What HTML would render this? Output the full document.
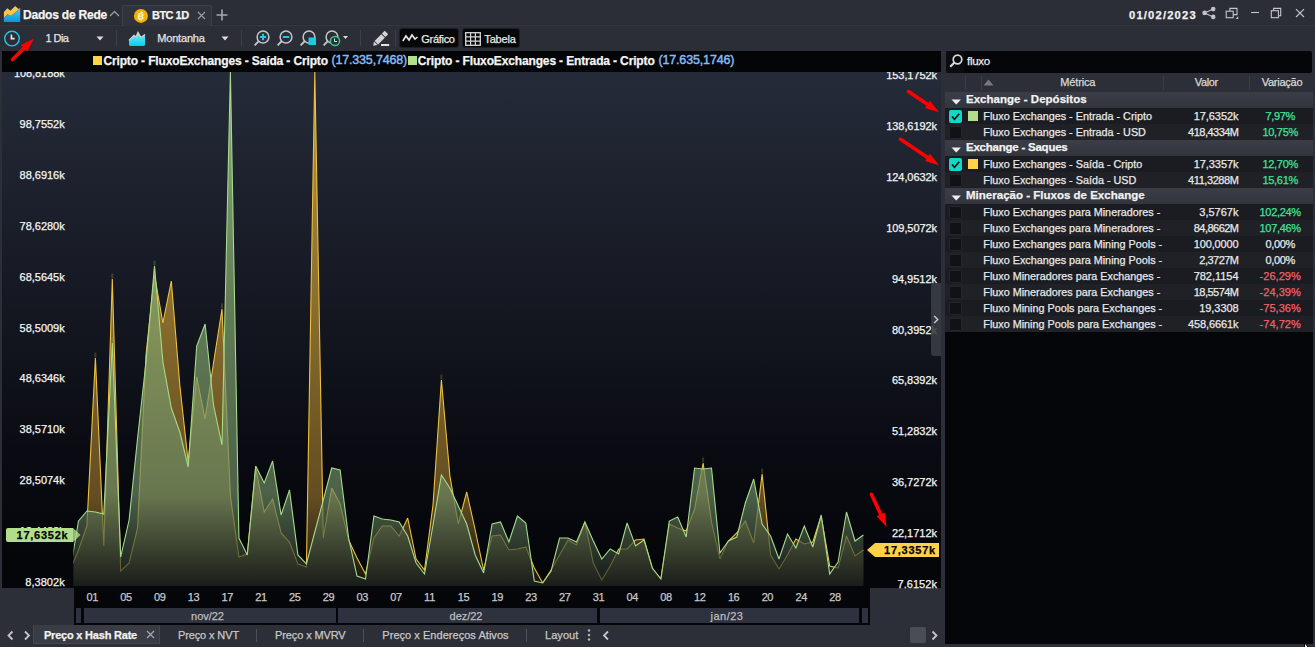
<!DOCTYPE html>
<html><head><meta charset="utf-8">
<style>
html,body{margin:0;padding:0}
body{width:1315px;height:647px;overflow:hidden;position:relative;background:#2c2f37;font-family:"Liberation Sans",sans-serif}
.a{position:absolute;box-sizing:border-box}
.t{position:absolute;white-space:nowrap;line-height:1;-webkit-text-stroke:0.25px currentColor}
</style></head><body>
<div class="a" style="left:0px;top:0px;width:1315px;height:25px;background:#2b2e36;"></div>
<div class="a" style="left:0px;top:24px;width:1315px;height:1px;background:#282b31;"></div>
<div class="a" style="left:0px;top:25px;width:1315px;height:1px;background:#35383d;"></div>
<div class="a" style="left:0px;top:26px;width:1315px;height:25px;background:#2b2e36;"></div>
<svg class="a" style="left:3px;top:5px" width="18" height="18" viewBox="0 0 18 18">
<defs><linearGradient id="lgb" x1="0" y1="0" x2="0" y2="1"><stop offset="0" stop-color="#4cc8f8"/><stop offset="1" stop-color="#0896d8"/></linearGradient></defs>
<polygon points="0.9,7 4.4,3.3 7.4,5.7 12.2,1.1 15.5,4 17.2,3.1 17.2,3.4 8,10.9 4.4,9.2 0.9,13" fill="#fcc64a"/>
<polygon points="0.9,13 4.4,9.2 8,10.9 17.2,3.4 17.2,17 0.9,17" fill="url(#lgb)"/></svg>
<svg class="a" style="left:109px;top:10px" width="11" height="7"><polyline points="1,6 5.5,1.5 10,6" fill="none" stroke="#9a9ca2" stroke-width="1.3"/></svg>
<div class="a" style="left:122px;top:5px;width:90px;height:21px;background:#30333b;border:1px solid #3e4149;border-bottom:none;border-radius:2px 2px 0 0"></div>
<svg class="a" style="left:133px;top:8px" width="16" height="16" viewBox="0 0 16 16"><circle cx="7.9" cy="7.9" r="7" fill="#f1b300"/>
<text x="8" y="11.4" font-family="Liberation Sans" font-weight="bold" font-size="9" fill="#fff6dc" text-anchor="middle" transform="rotate(8 8 8)">B</text><path d="M7.6,3.6 V5 M9,3.8 V5 M7.2,11 V12.4 M8.6,11.2 V12.5" stroke="#fff6dc" stroke-width="0.9" transform="rotate(8 8 8)"/></svg>
<svg class="a" style="left:197px;top:11px" width="9" height="9"><path d="M1,1 L8,8 M8,1 L1,8" stroke="#9a9ca2" stroke-width="1.2"/></svg>
<svg class="a" style="left:216px;top:9px" width="12" height="12"><path d="M6,0.5 V11.5 M0.5,6 H11.5" stroke="#a6a8ad" stroke-width="1.6"/></svg>
<svg class="a" style="left:1190px;top:0" width="125" height="25" viewBox="1190 0 125 25">
<g fill="#c0c2c6"><circle cx="1213.2" cy="9.1" r="2.3"/><circle cx="1204.6" cy="12.9" r="2.3"/><circle cx="1213.2" cy="16.9" r="2.3"/></g>
<path d="M1213.2,9.1 L1204.6,12.9 L1213.2,16.9" stroke="#c0c2c6" stroke-width="1.1" fill="none"/>
<path d="M1229.9,11 V8.4 H1237 V14.6 H1233.3" stroke="#c4c6ca" stroke-width="1.1" fill="none"/>
<rect x="1226.2" y="11.2" width="7" height="6.5" stroke="#c4c6ca" stroke-width="1.1" fill="none"/>
<polygon points="1238.2,16.3 1238.2,19 1235.5,19" fill="#c4c6ca"/>
<path d="M1251.1,12.5 H1259" stroke="#c4c6ca" stroke-width="1.1"/>
<path d="M1273.6,10.6 V8.4 H1280.7 V15.8 H1278.5" stroke="#c4c6ca" stroke-width="1.1" fill="none"/>
<rect x="1271.3" y="10.7" width="7.1" height="7" stroke="#c4c6ca" stroke-width="1.1" fill="none"/>
<path d="M1296,9.2 L1304,17 M1304,9.2 L1296,17" stroke="#c4c6ca" stroke-width="1.1"/>
</svg>
<svg class="a" style="left:3px;top:30px" width="19" height="18"><circle cx="9" cy="8.6" r="7.3" stroke="#1ec9e6" stroke-width="1.4" fill="none"/><path d="M8.4,4.6 V8.6 H11.6" stroke="#e8e8e8" stroke-width="1.6" fill="none"/></svg>
<svg class="a" style="left:96px;top:36px" width="8" height="5"><polygon points="0.5,0.5 7.5,0.5 4,4.5" fill="#dcdcdc"/></svg>
<div class="a" style="left:116px;top:30px;width:1px;height:16px;background:#3d4048;"></div>
<svg class="a" style="left:128px;top:31px" width="18" height="16"><defs><linearGradient id="mg" x1="0" y1="0" x2="0" y2="1"><stop offset="0" stop-color="#7ee6f2"/><stop offset="1" stop-color="#00d2f2"/></linearGradient></defs>
<polygon points="1,9.5 6,4.5 8,6 10,1.5 13,6.5 17,3.5 17,14 16,15 2,15 1,14" fill="url(#mg)"/><polyline points="1,9.5 6,4.5 8,6 10,1.5 13,6.5 17,3.5" fill="none" stroke="#d0d2d6" stroke-width="1.4"/></svg>
<svg class="a" style="left:221px;top:36px" width="8" height="5"><polygon points="0.5,0.5 7.5,0.5 4,4.5" fill="#dcdcdc"/></svg>
<div class="a" style="left:241px;top:30px;width:1px;height:16px;background:#3d4048;"></div>
<svg class="a" style="left:253px;top:30px" width="18" height="17"><circle cx="10" cy="7" r="5.9" stroke="#c4c6ca" stroke-width="1.5" fill="none"/><path d="M5.9,11 L1.6,15.3" stroke="#c4c6ca" stroke-width="1.8"/><path d="M10,3.8 V10.2 M6.8,7 H13.2" stroke="#1ec9e6" stroke-width="2"/></svg>
<svg class="a" style="left:276px;top:30px" width="18" height="17"><circle cx="10" cy="7" r="5.9" stroke="#c4c6ca" stroke-width="1.5" fill="none"/><path d="M5.9,11 L1.6,15.3" stroke="#c4c6ca" stroke-width="1.8"/><path d="M6.8,7 H13.2" stroke="#1ec9e6" stroke-width="2"/></svg>
<svg class="a" style="left:299px;top:30px" width="18" height="17"><circle cx="10" cy="7" r="5.9" stroke="#c4c6ca" stroke-width="1.5" fill="none"/><path d="M5.9,11 L1.6,15.3" stroke="#c4c6ca" stroke-width="1.8"/><rect x="9.5" y="7.5" width="7.5" height="7.5" fill="#1ec9e6"/></svg>
<svg class="a" style="left:322px;top:30px" width="28" height="17"><circle cx="10" cy="7" r="5.9" stroke="#c4c6ca" stroke-width="1.5" fill="none"/><path d="M5.9,11 L1.6,15.3" stroke="#c4c6ca" stroke-width="1.8"/>
<circle cx="13" cy="11" r="4.6" fill="#2c2f37" stroke="#37c88a" stroke-width="1.5"/><path d="M12.5,8.5 V11.5 H15" stroke="#e0e0e0" stroke-width="1" fill="none"/>
<polygon points="21,6 26,6 23.5,9" fill="#dcdcdc"/></svg>
<div class="a" style="left:360px;top:30px;width:1px;height:16px;background:#3d4048;"></div>
<svg class="a" style="left:366px;top:26px" width="30" height="25"><g transform="translate(7.2,19.8) rotate(-45)" fill="#d2d4d8"><polygon points="0,0 3.6,-2.5 3.6,2.5"/><rect x="4.4" y="-2.5" width="9.6" height="5"/><rect x="14.8" y="-2.5" width="4" height="5" rx="0.8"/></g><rect x="15" y="18" width="8.2" height="2" fill="#e0e0e0"/></svg>
<div class="a" style="left:395px;top:30px;width:1px;height:16px;background:#3d4048;"></div>
<div class="a" style="left:399px;top:28px;width:60px;height:20px;background:#060709;border-radius:3px;border:1px solid #1c1e24"></div>
<svg class="a" style="left:402px;top:33px" width="16" height="10"><polyline points="0.8,8 4,3 7,7 10,2 13,6 15.5,4" fill="none" stroke="#e8e8e8" stroke-width="1.6"/></svg>
<div class="a" style="left:462px;top:28px;width:58px;height:20px;background:#060709;border-radius:3px;border:1px solid #1c1e24"></div>
<svg class="a" style="left:465px;top:32px" width="16" height="14"><rect x="0.7" y="0.7" width="14.6" height="12.6" fill="none" stroke="#d8d8d8" stroke-width="1.3"/><path d="M0.7,4.9 H15.3 M0.7,9.1 H15.3 M5.6,0.7 V13.3 M10.4,0.7 V13.3" stroke="#d8d8d8" stroke-width="1.2"/></svg>
<div class="a" style="left:2px;top:51px;width:939px;height:537px;background:linear-gradient(#272c3a 0px,#262b39 21px,#1c202c 149px,#13161f 279px,#0a0b12 399px,#05060a 509px,#05060a 537px);"></div>
<div class="a" style="left:74px;top:586px;width:796px;height:39px;background:#05060a;"></div>
<div class="a" style="left:2px;top:586px;width:71px;height:2px;background:#05060a;"></div>
<svg class="a" style="left:0;top:0" width="1315" height="647">
<defs>
<linearGradient id="gy" x1="0" y1="72" x2="0" y2="586" gradientUnits="userSpaceOnUse">
<stop offset="0" stop-color="#e8b83c" stop-opacity="0.75"/><stop offset="0.50" stop-color="#b08a30" stop-opacity="0.72"/><stop offset="0.83" stop-color="#8a6a2a" stop-opacity="0.7"/><stop offset="1" stop-color="#201c14" stop-opacity="0.7"/></linearGradient>
<linearGradient id="gg" x1="0" y1="72" x2="0" y2="586" gradientUnits="userSpaceOnUse">
<stop offset="0" stop-color="#a8d890" stop-opacity="0.75"/><stop offset="0.44" stop-color="#82a46c" stop-opacity="0.72"/><stop offset="0.82" stop-color="#6a8862" stop-opacity="0.7"/><stop offset="1" stop-color="#1a201e" stop-opacity="0.7"/></linearGradient>
<clipPath id="cp"><rect x="73.5" y="71.5" width="791" height="514.5"/></clipPath>
</defs>
<g clip-path="url(#cp)">
<path d="M70.1,586 L70.1,570.0 L78.5,550.0 L86.9,526.0 L95.4,358.0 L103.8,546.0 L112.3,279.0 L120.7,571.0 L129.1,563.0 L137.6,528.0 L146.0,355.0 L154.5,275.0 L162.9,323.0 L171.3,281.0 L179.8,385.0 L188.2,462.0 L196.7,377.0 L205.1,419.0 L213.5,363.0 L222.0,309.0 L230.4,496.0 L238.9,557.0 L247.3,554.0 L255.7,468.0 L264.2,512.0 L272.6,499.0 L281.1,533.0 L289.5,542.0 L297.9,564.0 L306.4,567.0 L314.8,72.0 L323.3,538.0 L331.7,488.0 L340.1,504.0 L348.6,540.0 L357.0,558.0 L365.5,574.0 L373.9,538.0 L382.3,526.0 L390.8,526.0 L399.2,536.0 L407.7,518.0 L416.1,559.0 L424.5,570.0 L433.0,505.0 L441.4,380.0 L449.9,476.0 L458.3,524.0 L466.7,492.0 L475.2,530.0 L483.6,570.0 L492.1,536.0 L500.5,535.0 L508.9,550.0 L517.4,549.0 L525.8,547.0 L534.3,568.0 L542.7,583.0 L551.1,570.0 L559.6,555.0 L568.0,540.0 L576.5,545.0 L584.9,522.0 L593.3,563.0 L601.8,580.0 L610.2,566.0 L618.7,549.0 L627.1,549.0 L635.5,540.0 L644.0,539.0 L652.4,569.0 L660.9,579.0 L669.3,524.0 L677.7,528.0 L686.2,531.0 L694.6,509.0 L703.1,463.0 L711.5,522.0 L719.9,559.0 L728.4,541.0 L736.8,533.0 L745.3,521.0 L753.7,543.0 L762.1,474.0 L770.6,555.0 L779.0,569.0 L787.5,555.0 L795.9,539.0 L804.3,544.0 L812.8,542.0 L821.2,516.0 L829.7,566.0 L838.1,568.0 L846.5,536.0 L855.0,556.0 L863.4,550.0 L863.4,586 Z" fill="url(#gy)"/>
<polyline points="70.1,570.0 78.5,550.0 86.9,526.0 95.4,358.0 103.8,546.0 112.3,279.0 120.7,571.0 129.1,563.0 137.6,528.0 146.0,355.0 154.5,275.0 162.9,323.0 171.3,281.0 179.8,385.0 188.2,462.0 196.7,377.0 205.1,419.0 213.5,363.0 222.0,309.0 230.4,496.0 238.9,557.0 247.3,554.0 255.7,468.0 264.2,512.0 272.6,499.0 281.1,533.0 289.5,542.0 297.9,564.0 306.4,567.0 314.8,72.0 323.3,538.0 331.7,488.0 340.1,504.0 348.6,540.0 357.0,558.0 365.5,574.0 373.9,538.0 382.3,526.0 390.8,526.0 399.2,536.0 407.7,518.0 416.1,559.0 424.5,570.0 433.0,505.0 441.4,380.0 449.9,476.0 458.3,524.0 466.7,492.0 475.2,530.0 483.6,570.0 492.1,536.0 500.5,535.0 508.9,550.0 517.4,549.0 525.8,547.0 534.3,568.0 542.7,583.0 551.1,570.0 559.6,555.0 568.0,540.0 576.5,545.0 584.9,522.0 593.3,563.0 601.8,580.0 610.2,566.0 618.7,549.0 627.1,549.0 635.5,540.0 644.0,539.0 652.4,569.0 660.9,579.0 669.3,524.0 677.7,528.0 686.2,531.0 694.6,509.0 703.1,463.0 711.5,522.0 719.9,559.0 728.4,541.0 736.8,533.0 745.3,521.0 753.7,543.0 762.1,474.0 770.6,555.0 779.0,569.0 787.5,555.0 795.9,539.0 804.3,544.0 812.8,542.0 821.2,516.0 829.7,566.0 838.1,568.0 846.5,536.0 855.0,556.0 863.4,550.0" fill="none" stroke="#eec040" stroke-width="1.1" stroke-linejoin="miter" stroke-miterlimit="3"/>
<path d="M70.1,586 L70.1,571.0 L78.5,521.0 L86.9,511.0 L95.4,512.0 L103.8,514.0 L112.3,343.0 L120.7,557.0 L129.1,520.0 L137.6,438.0 L146.0,362.0 L154.5,266.0 L162.9,362.0 L171.3,408.0 L179.8,432.0 L188.2,467.0 L196.7,346.0 L205.1,324.0 L213.5,405.0 L222.0,445.0 L230.4,72.0 L238.9,538.0 L247.3,555.0 L255.7,466.0 L264.2,483.0 L272.6,461.0 L281.1,515.0 L289.5,490.0 L297.9,555.0 L306.4,564.0 L314.8,532.0 L323.3,500.0 L331.7,468.0 L340.1,470.0 L348.6,538.0 L357.0,576.0 L365.5,579.0 L373.9,516.0 L382.3,519.0 L390.8,520.0 L399.2,522.0 L407.7,536.0 L416.1,563.0 L424.5,574.0 L433.0,525.0 L441.4,475.0 L449.9,488.0 L458.3,506.0 L466.7,524.0 L475.2,555.0 L483.6,573.0 L492.1,524.0 L500.5,522.0 L508.9,542.0 L517.4,516.0 L525.8,523.0 L534.3,581.0 L542.7,583.0 L551.1,571.0 L559.6,538.0 L568.0,538.0 L576.5,542.0 L584.9,522.0 L593.3,541.0 L601.8,559.0 L610.2,549.0 L618.7,554.0 L627.1,523.0 L635.5,546.0 L644.0,540.0 L652.4,568.0 L660.9,579.0 L669.3,521.0 L677.7,517.0 L686.2,537.0 L694.6,468.0 L703.1,469.0 L711.5,468.0 L719.9,553.0 L728.4,541.0 L736.8,537.0 L745.3,503.0 L753.7,479.0 L762.1,524.0 L770.6,536.0 L779.0,559.0 L787.5,534.0 L795.9,548.0 L804.3,526.0 L812.8,547.0 L821.2,515.0 L829.7,574.0 L838.1,562.0 L846.5,512.0 L855.0,541.0 L863.4,535.0 L863.4,586 Z" fill="url(#gg)"/>
<polyline points="70.1,571.0 78.5,521.0 86.9,511.0 95.4,512.0 103.8,514.0 112.3,343.0 120.7,557.0 129.1,520.0 137.6,438.0 146.0,362.0 154.5,266.0 162.9,362.0 171.3,408.0 179.8,432.0 188.2,467.0 196.7,346.0 205.1,324.0 213.5,405.0 222.0,445.0 230.4,72.0 238.9,538.0 247.3,555.0 255.7,466.0 264.2,483.0 272.6,461.0 281.1,515.0 289.5,490.0 297.9,555.0 306.4,564.0 314.8,532.0 323.3,500.0 331.7,468.0 340.1,470.0 348.6,538.0 357.0,576.0 365.5,579.0 373.9,516.0 382.3,519.0 390.8,520.0 399.2,522.0 407.7,536.0 416.1,563.0 424.5,574.0 433.0,525.0 441.4,475.0 449.9,488.0 458.3,506.0 466.7,524.0 475.2,555.0 483.6,573.0 492.1,524.0 500.5,522.0 508.9,542.0 517.4,516.0 525.8,523.0 534.3,581.0 542.7,583.0 551.1,571.0 559.6,538.0 568.0,538.0 576.5,542.0 584.9,522.0 593.3,541.0 601.8,559.0 610.2,549.0 618.7,554.0 627.1,523.0 635.5,546.0 644.0,540.0 652.4,568.0 660.9,579.0 669.3,521.0 677.7,517.0 686.2,537.0 694.6,468.0 703.1,469.0 711.5,468.0 719.9,553.0 728.4,541.0 736.8,537.0 745.3,503.0 753.7,479.0 762.1,524.0 770.6,536.0 779.0,559.0 787.5,534.0 795.9,548.0 804.3,526.0 812.8,547.0 821.2,515.0 829.7,574.0 838.1,562.0 846.5,512.0 855.0,541.0 863.4,535.0" fill="none" stroke="#a6da8a" stroke-width="1.1" stroke-linejoin="miter" stroke-miterlimit="3"/>
<rect x="94.4" y="352.5" width="2" height="5" fill="#e8c040" opacity="0.22"/><rect x="111.3" y="273.5" width="2" height="5" fill="#e8c040" opacity="0.22"/><rect x="153.5" y="269.5" width="2" height="5" fill="#e8c040" opacity="0.22"/><rect x="221.0" y="303.5" width="2" height="5" fill="#e8c040" opacity="0.22"/><rect x="313.8" y="66.5" width="2" height="5" fill="#e8c040" opacity="0.22"/><rect x="440.4" y="374.5" width="2" height="5" fill="#e8c040" opacity="0.22"/><rect x="702.1" y="457.5" width="2" height="5" fill="#e8c040" opacity="0.22"/><rect x="761.1" y="468.5" width="2" height="5" fill="#e8c040" opacity="0.22"/>
<rect x="111.3" y="337.5" width="2" height="5" fill="#a6da8a" opacity="0.22"/><rect x="153.5" y="260.5" width="2" height="5" fill="#a6da8a" opacity="0.22"/><rect x="229.4" y="66.5" width="2" height="5" fill="#a6da8a" opacity="0.22"/>
</g>
</svg>
<div class="a" style="left:2px;top:51px;width:939px;height:21px;background:#040507;z-index:2"></div>
<div class="a" style="left:93px;top:56px;width:9px;height:9px;background:#ffd24a;z-index:3"></div>
<div class="a" style="left:408px;top:56px;width:9px;height:9px;background:#b3e08c;z-index:3"></div>
<div class="a" style="left:76px;top:608px;width:5px;height:15px;background:#2e313e;"></div>
<div class="a" style="left:84px;top:608px;width:252px;height:15px;background:#2e313e;"></div>
<div class="a" style="left:338px;top:608px;width:259px;height:15px;background:#2e313e;"></div>
<div class="a" style="left:600px;top:608px;width:259px;height:15px;background:#2e313e;"></div>
<div class="a" style="left:862px;top:608px;width:6px;height:15px;background:#2e313e;"></div>
<svg class="a" style="left:5px;top:527px;z-index:4" width="78" height="16"><path d="M3,1 H68 V15 H3 Q1,15 1,13 V3 Q1,1 3,1 Z" fill="#b2de8c"/><path d="M68,1 L75.5,8 L68,15 Z" fill="#b2de8c" opacity="0.8"/></svg>
<svg class="a" style="left:866px;top:542px;z-index:4" width="76" height="16"><path d="M1,8 L9,1 H73 V15 H9 Z" fill="#ffd24a"/></svg>
<div class="a" style="left:0px;top:625px;width:945px;height:22px;background:#2c2f37;"></div>
<svg class="a" style="left:5px;top:630px" width="30" height="11"><polyline points="7.5,1.5 3.5,5.5 7.5,9.5" fill="none" stroke="#c4c6ca" stroke-width="1.8"/><polyline points="20,1.5 24,5.5 20,9.5" fill="none" stroke="#c4c6ca" stroke-width="1.8"/></svg>
<div class="a" style="left:33px;top:625px;width:127px;height:19px;background:#393c44;border:1px solid #45484f;border-top:none"></div>
<svg class="a" style="left:146px;top:630px" width="9" height="9"><path d="M1,1 L8,8 M8,1 L1,8" stroke="#a4a6ab" stroke-width="1.3"/></svg>
<div class="a" style="left:256px;top:629px;width:1px;height:13px;background:#4d5057;"></div>
<div class="a" style="left:363px;top:629px;width:1px;height:13px;background:#4d5057;"></div>
<div class="a" style="left:526px;top:629px;width:1px;height:13px;background:#4d5057;"></div>
<svg class="a" style="left:587px;top:628px" width="4" height="14"><circle cx="2" cy="2.5" r="1.2" fill="#b8babf"/><circle cx="2" cy="7" r="1.2" fill="#b8babf"/><circle cx="2" cy="11.5" r="1.2" fill="#b8babf"/></svg>
<svg class="a" style="left:601px;top:630px" width="9" height="11"><polyline points="7,1.5 3,5.5 7,9.5" fill="none" stroke="#c4c6ca" stroke-width="1.8"/></svg>
<div class="a" style="left:910px;top:627px;width:16px;height:16px;background:#4a4d55;border-radius:2px"></div>
<svg class="a" style="left:930px;top:630px" width="9" height="11"><polyline points="2.5,1.5 6.5,5.5 2.5,9.5" fill="none" stroke="#c4c6ca" stroke-width="1.8"/></svg>
<div class="a" style="left:931px;top:283px;width:10px;height:73px;background:rgba(58,61,69,0.88);border-radius:3px 0 0 3px;z-index:2"></div>
<svg class="a" style="left:933px;top:315px;z-index:3" width="6" height="9"><polyline points="1.2,1 4.8,4.5 1.2,8" fill="none" stroke="#c8cace" stroke-width="1.4"/></svg>
<div class="a" style="left:945px;top:51px;width:370px;height:596px;background:#2c2f37;"></div>
<div class="a" style="left:946px;top:51px;width:366px;height:22px;background:#05060a;border-radius:2px"></div>
<div class="a" style="left:946px;top:51px;width:18px;height:22px;background:#0b0c10;border-radius:2px 0 0 2px"></div>
<svg class="a" style="left:948px;top:53px" width="16" height="16"><circle cx="9.5" cy="6.5" r="4.3" fill="none" stroke="#d8d8d8" stroke-width="1.7"/><path d="M6.5,9.5 L2.2,13.8" stroke="#d8d8d8" stroke-width="2.2"/></svg>
<div class="a" style="left:965px;top:76px;width:1px;height:14px;background:#3a3d45;"></div>
<div class="a" style="left:981px;top:76px;width:1px;height:14px;background:#3a3d45;"></div>
<div class="a" style="left:1163px;top:76px;width:1px;height:14px;background:#3a3d45;"></div>
<div class="a" style="left:1249px;top:76px;width:1px;height:14px;background:#3a3d45;"></div>
<svg class="a" style="left:983px;top:79px" width="11" height="7"><polygon points="5.5,0.5 10.5,6.5 0.5,6.5" fill="#77797e"/></svg>
<div class="a" style="left:945px;top:331px;width:368px;height:313px;background:#05060a;"></div>
<div class="a" style="left:945px;top:92px;width:368px;height:16px;background:linear-gradient(#3b3e46,#32353c);"></div>
<svg class="a" style="left:951px;top:99px" width="11" height="6"><polygon points="0.5,0.5 10,0.5 5.25,5.5" fill="#ececec"/></svg>
<div class="a" style="left:945px;top:108px;width:368px;height:16px;background:#1a1c21;"></div>
<div class="a" style="left:949px;top:110px;width:13px;height:13px;background:#12d6c6;border-radius:2px"></div>
<svg class="a" style="left:950px;top:111px" width="11" height="11"><polyline points="2,5.5 4.5,8.2 9.2,2.8" fill="none" stroke="#0a0a0a" stroke-width="1.6"/></svg>
<div class="a" style="left:968px;top:111px;width:10px;height:10px;background:#b2de8c;"></div>
<div class="a" style="left:945px;top:124px;width:368px;height:16px;background:#1f2126;"></div>
<div class="a" style="left:949px;top:126px;width:13px;height:13px;background:#111216;border:1px solid #24262b;border-radius:2px"></div>
<div class="a" style="left:945px;top:140px;width:368px;height:16px;background:linear-gradient(#3b3e46,#32353c);"></div>
<svg class="a" style="left:951px;top:147px" width="11" height="6"><polygon points="0.5,0.5 10,0.5 5.25,5.5" fill="#ececec"/></svg>
<div class="a" style="left:945px;top:156px;width:368px;height:16px;background:#1a1c21;"></div>
<div class="a" style="left:949px;top:158px;width:13px;height:13px;background:#12d6c6;border-radius:2px"></div>
<svg class="a" style="left:950px;top:159px" width="11" height="11"><polyline points="2,5.5 4.5,8.2 9.2,2.8" fill="none" stroke="#0a0a0a" stroke-width="1.6"/></svg>
<div class="a" style="left:968px;top:159px;width:10px;height:10px;background:#ffd24a;"></div>
<div class="a" style="left:945px;top:172px;width:368px;height:16px;background:#1f2126;"></div>
<div class="a" style="left:949px;top:174px;width:13px;height:13px;background:#111216;border:1px solid #24262b;border-radius:2px"></div>
<div class="a" style="left:945px;top:188px;width:368px;height:16px;background:linear-gradient(#3b3e46,#32353c);"></div>
<svg class="a" style="left:951px;top:195px" width="11" height="6"><polygon points="0.5,0.5 10,0.5 5.25,5.5" fill="#ececec"/></svg>
<div class="a" style="left:945px;top:204px;width:368px;height:16px;background:#1a1c21;"></div>
<div class="a" style="left:949px;top:206px;width:13px;height:13px;background:#111216;border:1px solid #24262b;border-radius:2px"></div>
<div class="a" style="left:945px;top:220px;width:368px;height:16px;background:#1f2126;"></div>
<div class="a" style="left:949px;top:222px;width:13px;height:13px;background:#111216;border:1px solid #24262b;border-radius:2px"></div>
<div class="a" style="left:945px;top:236px;width:368px;height:16px;background:#1a1c21;"></div>
<div class="a" style="left:949px;top:238px;width:13px;height:13px;background:#111216;border:1px solid #24262b;border-radius:2px"></div>
<div class="a" style="left:945px;top:252px;width:368px;height:16px;background:#1f2126;"></div>
<div class="a" style="left:949px;top:254px;width:13px;height:13px;background:#111216;border:1px solid #24262b;border-radius:2px"></div>
<div class="a" style="left:945px;top:268px;width:368px;height:16px;background:#1a1c21;"></div>
<div class="a" style="left:949px;top:270px;width:13px;height:13px;background:#111216;border:1px solid #24262b;border-radius:2px"></div>
<div class="a" style="left:945px;top:284px;width:368px;height:16px;background:#1f2126;"></div>
<div class="a" style="left:949px;top:286px;width:13px;height:13px;background:#111216;border:1px solid #24262b;border-radius:2px"></div>
<div class="a" style="left:945px;top:300px;width:368px;height:16px;background:#1a1c21;"></div>
<div class="a" style="left:949px;top:302px;width:13px;height:13px;background:#111216;border:1px solid #24262b;border-radius:2px"></div>
<div class="a" style="left:945px;top:316px;width:368px;height:16px;background:#1f2126;"></div>
<div class="a" style="left:949px;top:318px;width:13px;height:13px;background:#111216;border:1px solid #24262b;border-radius:2px"></div>
<svg class="a" style="left:0;top:0;z-index:6" width="1315" height="647"><line x1="12.5" y1="59.5" x2="25.4" y2="46.9" stroke="#ff0000" stroke-width="3.6" stroke-linecap="round"/><polygon points="34,38.5 27.1,51.4 20.9,45.1" fill="#ff0000"/></svg>
<svg class="a" style="left:0;top:0;z-index:6" width="1315" height="647"><line x1="908.5" y1="91.5" x2="929.2" y2="105.6" stroke="#ff0000" stroke-width="3.6" stroke-linecap="round"/><polygon points="939.1,112.3 925.0,108.1 930.0,100.8" fill="#ff0000"/></svg>
<svg class="a" style="left:0;top:0;z-index:6" width="1315" height="647"><line x1="900.5" y1="139.3" x2="929.1" y2="158.5" stroke="#ff0000" stroke-width="3.6" stroke-linecap="round"/><polygon points="939.1,165.2 925.0,161.1 929.9,153.7" fill="#ff0000"/></svg>
<svg class="a" style="left:0;top:0;z-index:6" width="1315" height="647"><line x1="871.4" y1="494.3" x2="881.6" y2="516.2" stroke="#ff0000" stroke-width="3.6" stroke-linecap="round"/><polygon points="886.6,527.1 876.7,516.2 884.7,512.5" fill="#ff0000"/></svg>
<svg class="a" style="left:1303px;top:642px;z-index:7" width="10" height="6"><polygon points="1.5,0.8 1.5,6 6,6" fill="#ffffff" stroke="#000" stroke-width="1"/></svg>
<span class="t" id="t0" style="left:23.00px;top:8.80px;font-size:12px;font-weight:bold;color:#f4f4f4;letter-spacing:-0.208px;">Dados de Rede</span>
<span class="t" id="t1" style="left:152.00px;top:9.65px;font-size:11px;font-weight:bold;color:#f4f4f4;letter-spacing:-0.522px;">BTC 1D</span>
<span class="t" id="t2" style="left:1129.00px;top:9.78px;font-size:11.2px;font-weight:bold;color:#f0f0f0;letter-spacing:1.180px;">01/02/2023</span>
<span class="t" id="t3" style="left:45.50px;top:32.95px;font-size:11px;font-weight:normal;color:#e4e4e4;letter-spacing:-0.577px;">1 Dia</span>
<span class="t" id="t4" style="left:157.30px;top:32.95px;font-size:11px;font-weight:normal;color:#e4e4e4;letter-spacing:-0.192px;">Montanha</span>
<span class="t" id="t5" style="left:421.30px;top:34.25px;font-size:11px;font-weight:normal;color:#e8e8e8;letter-spacing:-0.296px;">Gráfico</span>
<span class="t" id="t6" style="left:484.30px;top:34.25px;font-size:11px;font-weight:normal;color:#e8e8e8;letter-spacing:-0.170px;">Tabela</span>
<span class="t" id="t7" style="left:103.40px;top:54.50px;font-size:12px;font-weight:bold;color:#f4f4f4;letter-spacing:-0.138px;z-index:3">Cripto - FluxoExchanges - Saída - Cripto</span>
<span class="t" id="t8" style="left:331.50px;top:54.08px;font-size:12.5px;font-weight:normal;color:#86baf4;letter-spacing:-0.180px;z-index:3;-webkit-text-stroke:0.45px #86baf4">(17.335,7468)</span>
<span class="t" id="t9" style="left:417.80px;top:54.50px;font-size:12px;font-weight:bold;color:#f4f4f4;letter-spacing:-0.140px;z-index:3">Cripto - FluxoExchanges - Entrada - Cripto</span>
<span class="t" id="t10" style="left:658.40px;top:54.08px;font-size:12.5px;font-weight:normal;color:#86baf4;letter-spacing:-0.142px;z-index:3;-webkit-text-stroke:0.45px #86baf4">(17.635,1746)</span>
<span class="t" id="t11" style="left:13.94px;top:68.05px;font-size:11px;font-weight:normal;color:#f4f4f4;letter-spacing:-0.070px;">108,8188k</span>
<span class="t" id="t12" style="left:19.58px;top:118.95px;font-size:11px;font-weight:normal;color:#f4f4f4;letter-spacing:-0.018px;">98,7552k</span>
<span class="t" id="t13" style="left:19.58px;top:169.85px;font-size:11px;font-weight:normal;color:#f4f4f4;letter-spacing:-0.018px;">88,6916k</span>
<span class="t" id="t14" style="left:19.58px;top:220.75px;font-size:11px;font-weight:normal;color:#f4f4f4;letter-spacing:-0.018px;">78,6280k</span>
<span class="t" id="t15" style="left:19.58px;top:271.65px;font-size:11px;font-weight:normal;color:#f4f4f4;letter-spacing:-0.018px;">68,5645k</span>
<span class="t" id="t16" style="left:19.58px;top:322.55px;font-size:11px;font-weight:normal;color:#f4f4f4;letter-spacing:-0.018px;">58,5009k</span>
<span class="t" id="t17" style="left:19.58px;top:373.45px;font-size:11px;font-weight:normal;color:#f4f4f4;letter-spacing:-0.018px;">48,6346k</span>
<span class="t" id="t18" style="left:19.58px;top:424.35px;font-size:11px;font-weight:normal;color:#f4f4f4;letter-spacing:-0.018px;">38,5710k</span>
<span class="t" id="t19" style="left:19.58px;top:475.25px;font-size:11px;font-weight:normal;color:#f4f4f4;letter-spacing:-0.018px;">28,5074k</span>
<span class="t" id="t20" style="left:19.58px;top:526.15px;font-size:11px;font-weight:normal;color:#f4f4f4;letter-spacing:-0.018px;">18,4438k</span>
<span class="t" id="t21" style="left:25.22px;top:577.05px;font-size:11px;font-weight:normal;color:#f4f4f4;letter-spacing:0.046px;">8,3802k</span>
<span class="t" id="t22" style="left:886.24px;top:70.05px;font-size:11px;font-weight:normal;color:#f4f4f4;letter-spacing:-0.070px;">153,1752k</span>
<span class="t" id="t23" style="left:886.24px;top:120.95px;font-size:11px;font-weight:normal;color:#f4f4f4;letter-spacing:-0.070px;">138,6192k</span>
<span class="t" id="t24" style="left:886.24px;top:171.85px;font-size:11px;font-weight:normal;color:#f4f4f4;letter-spacing:-0.070px;">124,0632k</span>
<span class="t" id="t25" style="left:886.24px;top:222.75px;font-size:11px;font-weight:normal;color:#f4f4f4;letter-spacing:-0.070px;">109,5072k</span>
<span class="t" id="t26" style="left:891.88px;top:273.65px;font-size:11px;font-weight:normal;color:#f4f4f4;letter-spacing:-0.018px;">94,9512k</span>
<span class="t" id="t27" style="left:891.88px;top:324.55px;font-size:11px;font-weight:normal;color:#f4f4f4;letter-spacing:-0.018px;">80,3952k</span>
<span class="t" id="t28" style="left:891.88px;top:375.45px;font-size:11px;font-weight:normal;color:#f4f4f4;letter-spacing:-0.018px;">65,8392k</span>
<span class="t" id="t29" style="left:891.88px;top:426.35px;font-size:11px;font-weight:normal;color:#f4f4f4;letter-spacing:-0.018px;">51,2832k</span>
<span class="t" id="t30" style="left:891.88px;top:477.25px;font-size:11px;font-weight:normal;color:#f4f4f4;letter-spacing:-0.018px;">36,7272k</span>
<span class="t" id="t31" style="left:891.88px;top:528.15px;font-size:11px;font-weight:normal;color:#f4f4f4;letter-spacing:-0.018px;">22,1712k</span>
<span class="t" id="t32" style="left:897.52px;top:579.05px;font-size:11px;font-weight:normal;color:#f4f4f4;letter-spacing:0.046px;">7.6152k</span>
<span class="t" id="t33" style="left:86.44px;top:592.15px;font-size:11px;font-weight:normal;color:#c9c9c9;letter-spacing:-0.375px;">01</span>
<span class="t" id="t34" style="left:120.20px;top:592.15px;font-size:11px;font-weight:normal;color:#c9c9c9;letter-spacing:-0.375px;">05</span>
<span class="t" id="t35" style="left:153.96px;top:592.15px;font-size:11px;font-weight:normal;color:#c9c9c9;letter-spacing:-0.375px;">09</span>
<span class="t" id="t36" style="left:187.72px;top:592.15px;font-size:11px;font-weight:normal;color:#c9c9c9;letter-spacing:-0.375px;">13</span>
<span class="t" id="t37" style="left:221.48px;top:592.15px;font-size:11px;font-weight:normal;color:#c9c9c9;letter-spacing:-0.375px;">17</span>
<span class="t" id="t38" style="left:255.24px;top:592.15px;font-size:11px;font-weight:normal;color:#c9c9c9;letter-spacing:-0.375px;">21</span>
<span class="t" id="t39" style="left:289.00px;top:592.15px;font-size:11px;font-weight:normal;color:#c9c9c9;letter-spacing:-0.375px;">25</span>
<span class="t" id="t40" style="left:322.76px;top:592.15px;font-size:11px;font-weight:normal;color:#c9c9c9;letter-spacing:-0.375px;">29</span>
<span class="t" id="t41" style="left:356.52px;top:592.15px;font-size:11px;font-weight:normal;color:#c9c9c9;letter-spacing:-0.375px;">03</span>
<span class="t" id="t42" style="left:390.28px;top:592.15px;font-size:11px;font-weight:normal;color:#c9c9c9;letter-spacing:-0.375px;">07</span>
<span class="t" id="t43" style="left:424.04px;top:592.15px;font-size:11px;font-weight:normal;color:#c9c9c9;letter-spacing:0.039px;">11</span>
<span class="t" id="t44" style="left:457.80px;top:592.15px;font-size:11px;font-weight:normal;color:#c9c9c9;letter-spacing:-0.375px;">15</span>
<span class="t" id="t45" style="left:491.56px;top:592.15px;font-size:11px;font-weight:normal;color:#c9c9c9;letter-spacing:-0.375px;">19</span>
<span class="t" id="t46" style="left:525.32px;top:592.15px;font-size:11px;font-weight:normal;color:#c9c9c9;letter-spacing:-0.375px;">23</span>
<span class="t" id="t47" style="left:559.08px;top:592.15px;font-size:11px;font-weight:normal;color:#c9c9c9;letter-spacing:-0.375px;">27</span>
<span class="t" id="t48" style="left:592.84px;top:592.15px;font-size:11px;font-weight:normal;color:#c9c9c9;letter-spacing:-0.375px;">31</span>
<span class="t" id="t49" style="left:626.60px;top:592.15px;font-size:11px;font-weight:normal;color:#c9c9c9;letter-spacing:-0.375px;">04</span>
<span class="t" id="t50" style="left:660.36px;top:592.15px;font-size:11px;font-weight:normal;color:#c9c9c9;letter-spacing:-0.375px;">08</span>
<span class="t" id="t51" style="left:694.12px;top:592.15px;font-size:11px;font-weight:normal;color:#c9c9c9;letter-spacing:-0.375px;">12</span>
<span class="t" id="t52" style="left:727.88px;top:592.15px;font-size:11px;font-weight:normal;color:#c9c9c9;letter-spacing:-0.375px;">16</span>
<span class="t" id="t53" style="left:761.64px;top:592.15px;font-size:11px;font-weight:normal;color:#c9c9c9;letter-spacing:-0.375px;">20</span>
<span class="t" id="t54" style="left:795.40px;top:592.15px;font-size:11px;font-weight:normal;color:#c9c9c9;letter-spacing:-0.375px;">24</span>
<span class="t" id="t55" style="left:829.16px;top:592.15px;font-size:11px;font-weight:normal;color:#c9c9c9;letter-spacing:-0.375px;">28</span>
<span class="t" id="t56" style="left:191.05px;top:610.65px;font-size:11px;font-weight:normal;color:#bdbdbd;letter-spacing:-0.022px;">nov/22</span>
<span class="t" id="t57" style="left:449.55px;top:610.65px;font-size:11px;font-weight:normal;color:#bdbdbd;letter-spacing:-0.022px;">dez/22</span>
<span class="t" id="t58" style="left:710.55px;top:610.65px;font-size:11px;font-weight:normal;color:#bdbdbd;letter-spacing:0.486px;">jan/23</span>
<span class="t" id="t59" style="left:16.50px;top:529.65px;font-size:11px;font-weight:bold;color:#050505;letter-spacing:0.764px;z-index:5">17,6352k</span>
<span class="t" id="t60" style="left:884.00px;top:545.15px;font-size:11px;font-weight:bold;color:#050505;letter-spacing:0.764px;z-index:5">17,3357k</span>
<span class="t" id="t61" style="left:44.00px;top:629.95px;font-size:11px;font-weight:bold;color:#f2f2f2;letter-spacing:-0.212px;">Preço x Hash Rate</span>
<span class="t" id="t62" style="left:178.00px;top:629.95px;font-size:11px;font-weight:normal;color:#c8c8c8;letter-spacing:-0.124px;">Preço x NVT</span>
<span class="t" id="t63" style="left:275.00px;top:629.95px;font-size:11px;font-weight:normal;color:#c8c8c8;letter-spacing:-0.111px;">Preço x MVRV</span>
<span class="t" id="t64" style="left:382.30px;top:629.95px;font-size:11px;font-weight:normal;color:#c8c8c8;letter-spacing:0.040px;">Preço x Endereços Ativos</span>
<span class="t" id="t65" style="left:545.00px;top:629.95px;font-size:11px;font-weight:normal;color:#c8c8c8;letter-spacing:0.061px;">Layout</span>
<span class="t" id="t66" style="left:967.00px;top:55.73px;font-size:11.5px;font-weight:normal;color:#ececec;letter-spacing:-0.259px;">fluxo</span>
<span class="t" id="t67" style="left:1060.30px;top:77.05px;font-size:11px;font-weight:normal;color:#d8d8d8;letter-spacing:-0.152px;">Métrica</span>
<span class="t" id="t68" style="left:1194.80px;top:77.05px;font-size:11px;font-weight:normal;color:#d8d8d8;letter-spacing:-0.375px;">Valor</span>
<span class="t" id="t69" style="left:1261.75px;top:77.05px;font-size:11px;font-weight:normal;color:#d8d8d8;letter-spacing:-0.264px;">Variação</span>
<span class="t" id="t70" style="left:966.00px;top:93.92px;font-size:11.5px;font-weight:bold;color:#f2f2f2;letter-spacing:0.023px;">Exchange - Depósitos</span>
<span class="t" id="t71" style="left:983.30px;top:110.82px;font-size:10.8px;font-weight:normal;color:#e8e8e8;letter-spacing:0.000px;width:180px;overflow:hidden;"><span style="display:inline-block;width:180px;overflow:hidden;vertical-align:top">Fluxo Exchanges - Entrada - Cripto</span></span>
<span class="t" id="t72" style="left:1193.70px;top:110.65px;font-size:11px;font-weight:normal;color:#e8e8e8;letter-spacing:-0.058px;">17,6352k</span>
<span class="t" id="t73" style="left:1265.45px;top:110.65px;font-size:11px;font-weight:normal;color:#3ee39a;letter-spacing:-0.341px;">7,97%</span>
<span class="t" id="t74" style="left:983.30px;top:126.82px;font-size:10.8px;font-weight:normal;color:#e8e8e8;letter-spacing:0.000px;width:180px;overflow:hidden;"><span style="display:inline-block;width:180px;overflow:hidden;vertical-align:top">Fluxo Exchanges - Entrada - USD</span></span>
<span class="t" id="t75" style="left:1188.10px;top:126.65px;font-size:11px;font-weight:normal;color:#e8e8e8;letter-spacing:-0.516px;">418,4334M</span>
<span class="t" id="t76" style="left:1262.50px;top:126.65px;font-size:11px;font-weight:normal;color:#3ee39a;letter-spacing:-0.319px;">10,75%</span>
<span class="t" id="t77" style="left:966.00px;top:141.92px;font-size:11.5px;font-weight:bold;color:#f2f2f2;letter-spacing:-0.233px;">Exchange - Saques</span>
<span class="t" id="t78" style="left:983.30px;top:158.82px;font-size:10.8px;font-weight:normal;color:#e8e8e8;letter-spacing:0.000px;width:180px;overflow:hidden;"><span style="display:inline-block;width:180px;overflow:hidden;vertical-align:top">Fluxo Exchanges - Saída - Cripto</span></span>
<span class="t" id="t79" style="left:1193.70px;top:158.65px;font-size:11px;font-weight:normal;color:#e8e8e8;letter-spacing:-0.058px;">17,3357k</span>
<span class="t" id="t80" style="left:1262.50px;top:158.65px;font-size:11px;font-weight:normal;color:#3ee39a;letter-spacing:-0.319px;">12,70%</span>
<span class="t" id="t81" style="left:983.30px;top:174.82px;font-size:10.8px;font-weight:normal;color:#e8e8e8;letter-spacing:0.000px;width:180px;overflow:hidden;"><span style="display:inline-block;width:180px;overflow:hidden;vertical-align:top">Fluxo Exchanges - Saída - USD</span></span>
<span class="t" id="t82" style="left:1188.10px;top:174.65px;font-size:11px;font-weight:normal;color:#e8e8e8;letter-spacing:-0.426px;">411,3288M</span>
<span class="t" id="t83" style="left:1262.50px;top:174.65px;font-size:11px;font-weight:normal;color:#3ee39a;letter-spacing:-0.319px;">15,61%</span>
<span class="t" id="t84" style="left:966.00px;top:189.92px;font-size:11.5px;font-weight:bold;color:#f2f2f2;letter-spacing:0.010px;">Mineração - Fluxos de Exchange</span>
<span class="t" id="t85" style="left:983.30px;top:206.82px;font-size:10.8px;font-weight:normal;color:#e8e8e8;letter-spacing:0.000px;width:180px;overflow:hidden;"><span style="display:inline-block;width:180px;overflow:hidden;vertical-align:top">Fluxo Exchanges para Mineradores - Cripto</span></span>
<span class="t" id="t86" style="left:1199.30px;top:206.65px;font-size:11px;font-weight:normal;color:#e8e8e8;letter-spacing:0.006px;">3,5767k</span>
<span class="t" id="t87" style="left:1259.55px;top:206.65px;font-size:11px;font-weight:normal;color:#3ee39a;letter-spacing:-0.305px;">102,24%</span>
<span class="t" id="t88" style="left:983.30px;top:222.82px;font-size:10.8px;font-weight:normal;color:#e8e8e8;letter-spacing:0.000px;width:180px;overflow:hidden;"><span style="display:inline-block;width:180px;overflow:hidden;vertical-align:top">Fluxo Exchanges para Mineradores - USD</span></span>
<span class="t" id="t89" style="left:1193.70px;top:222.65px;font-size:11px;font-weight:normal;color:#e8e8e8;letter-spacing:-0.517px;">84,8662M</span>
<span class="t" id="t90" style="left:1259.55px;top:222.65px;font-size:11px;font-weight:normal;color:#3ee39a;letter-spacing:-0.305px;">107,46%</span>
<span class="t" id="t91" style="left:983.30px;top:238.82px;font-size:10.8px;font-weight:normal;color:#e8e8e8;letter-spacing:0.000px;width:180px;overflow:hidden;"><span style="display:inline-block;width:180px;overflow:hidden;vertical-align:top">Fluxo Exchanges para Mining Pools - Cripto</span></span>
<span class="t" id="t92" style="left:1193.70px;top:238.65px;font-size:11px;font-weight:normal;color:#e8e8e8;letter-spacing:-0.136px;">100,0000</span>
<span class="t" id="t93" style="left:1265.45px;top:238.65px;font-size:11px;font-weight:normal;color:#e8e8e8;letter-spacing:-0.341px;">0,00%</span>
<span class="t" id="t94" style="left:983.30px;top:254.82px;font-size:10.8px;font-weight:normal;color:#e8e8e8;letter-spacing:0.000px;width:180px;overflow:hidden;"><span style="display:inline-block;width:180px;overflow:hidden;vertical-align:top">Fluxo Exchanges para Mining Pools - USD</span></span>
<span class="t" id="t95" style="left:1199.30px;top:254.65px;font-size:11px;font-weight:normal;color:#e8e8e8;letter-spacing:-0.516px;">2,3727M</span>
<span class="t" id="t96" style="left:1265.45px;top:254.65px;font-size:11px;font-weight:normal;color:#e8e8e8;letter-spacing:-0.341px;">0,00%</span>
<span class="t" id="t97" style="left:983.30px;top:270.82px;font-size:10.8px;font-weight:normal;color:#e8e8e8;letter-spacing:0.000px;width:180px;overflow:hidden;"><span style="display:inline-block;width:180px;overflow:hidden;vertical-align:top">Fluxo Mineradores para Exchanges - Cripto</span></span>
<span class="t" id="t98" style="left:1193.70px;top:270.65px;font-size:11px;font-weight:normal;color:#e8e8e8;letter-spacing:-0.035px;">782,1154</span>
<span class="t" id="t99" style="left:1259.55px;top:270.65px;font-size:11px;font-weight:normal;color:#f2606c;letter-spacing:0.045px;">-26,29%</span>
<span class="t" id="t100" style="left:983.30px;top:286.82px;font-size:10.8px;font-weight:normal;color:#e8e8e8;letter-spacing:0.000px;width:180px;overflow:hidden;"><span style="display:inline-block;width:180px;overflow:hidden;vertical-align:top">Fluxo Mineradores para Exchanges - USD</span></span>
<span class="t" id="t101" style="left:1193.70px;top:286.65px;font-size:11px;font-weight:normal;color:#e8e8e8;letter-spacing:-0.517px;">18,5574M</span>
<span class="t" id="t102" style="left:1259.55px;top:286.65px;font-size:11px;font-weight:normal;color:#f2606c;letter-spacing:0.045px;">-24,39%</span>
<span class="t" id="t103" style="left:983.30px;top:302.82px;font-size:10.8px;font-weight:normal;color:#e8e8e8;letter-spacing:0.000px;width:180px;overflow:hidden;"><span style="display:inline-block;width:180px;overflow:hidden;vertical-align:top">Fluxo Mining Pools para Exchanges - Cripto</span></span>
<span class="t" id="t104" style="left:1199.30px;top:302.65px;font-size:11px;font-weight:normal;color:#e8e8e8;letter-spacing:-0.081px;">19,3308</span>
<span class="t" id="t105" style="left:1259.55px;top:302.65px;font-size:11px;font-weight:normal;color:#f2606c;letter-spacing:0.045px;">-75,36%</span>
<span class="t" id="t106" style="left:983.30px;top:318.82px;font-size:10.8px;font-weight:normal;color:#e8e8e8;letter-spacing:0.000px;width:180px;overflow:hidden;"><span style="display:inline-block;width:180px;overflow:hidden;vertical-align:top">Fluxo Mining Pools para Exchanges - USD</span></span>
<span class="t" id="t107" style="left:1188.10px;top:318.65px;font-size:11px;font-weight:normal;color:#e8e8e8;letter-spacing:-0.110px;">458,6661k</span>
<span class="t" id="t108" style="left:1259.55px;top:318.65px;font-size:11px;font-weight:normal;color:#f2606c;letter-spacing:0.045px;">-74,72%</span>
</body></html>
